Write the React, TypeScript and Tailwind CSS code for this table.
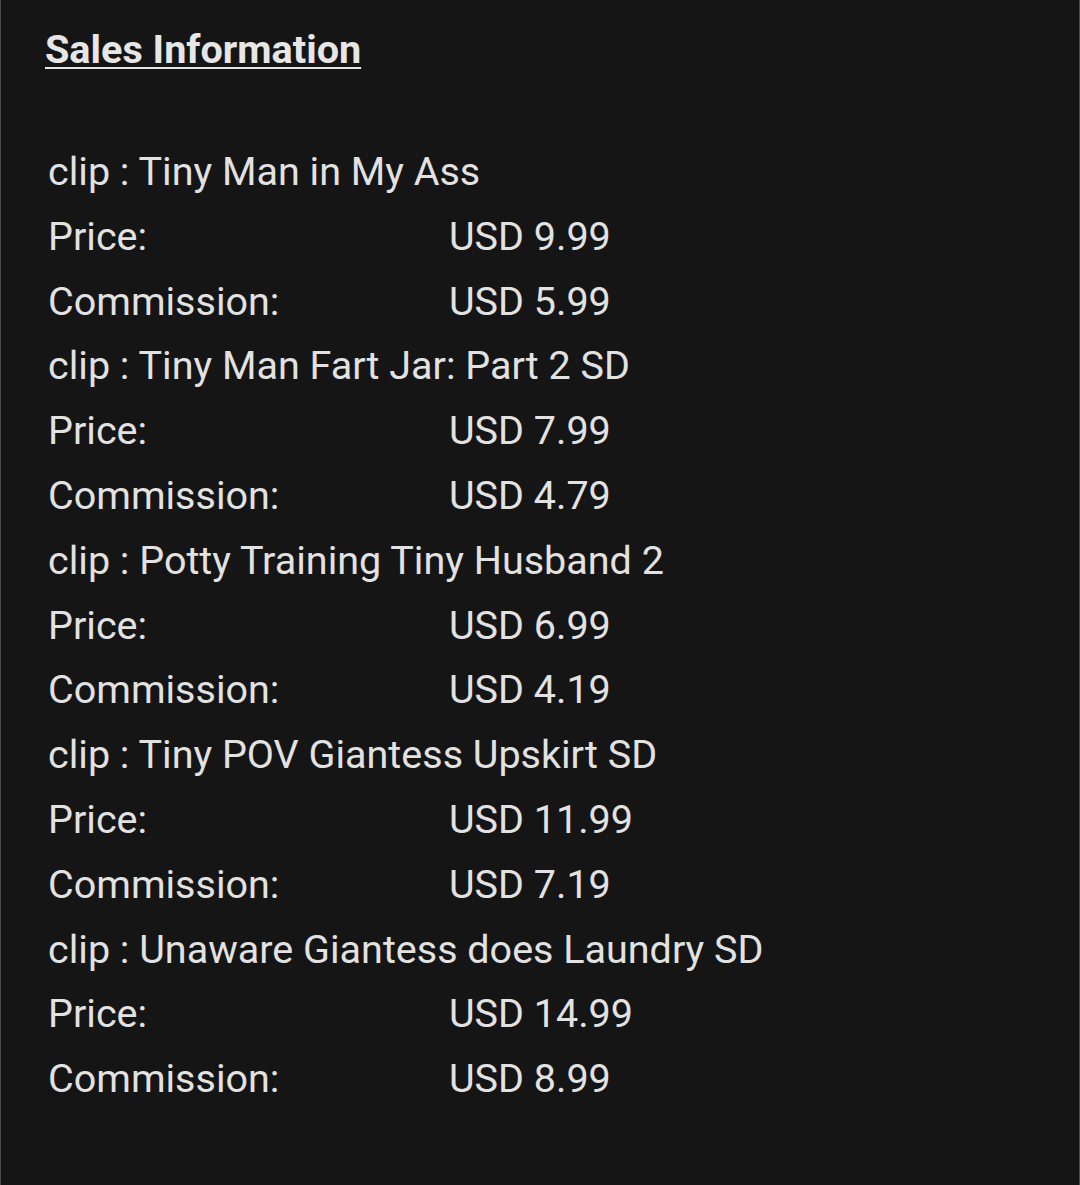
import React from "react";

interface SaleItem {
    clip: string;
    price: string;
    commission: string;
}

const sales: SaleItem[] = [
    { clip: "Tiny Man in My Ass", price: "USD 9.99", commission: "USD 5.99" },
    { clip: "Tiny Man Fart Jar: Part 2 SD", price: "USD 7.99", commission: "USD 4.79" },
    { clip: "Potty Training Tiny Husband 2", price: "USD 6.99", commission: "USD 4.19" },
    { clip: "Tiny POV Giantess Upskirt SD", price: "USD 11.99", commission: "USD 7.19" },
    { clip: "Unaware Giantess does Laundry SD", price: "USD 14.99", commission: "USD 8.99" },
];

export default function App() {
    return (
        <div className="w-[1080px] h-[1185px] bg-[#151515] border-x border-[#4a4a4a] text-[#e2e2e2] font-['Roboto',sans-serif] pl-[47px] pt-[26px] overflow-hidden">
            {/* Header */}
            <h2 className="-ml-[3px] text-[39.6px] leading-[48px] font-bold underline decoration-[2px] underline-offset-[4px] text-[#e6e6e6]">
                Sales Information
            </h2>

            {/* Sales rows */}
            <div className="mt-[66px] text-[39.5px] leading-[64.8px]">
                {sales.map((sale) => (
                    <div key={sale.clip}>
                        <div className="whitespace-nowrap">clip : {sale.clip}</div>
                        <div className="grid grid-cols-[401px_1fr]">
                            <span>Price:</span>
                            <span>{sale.price}</span>
                        </div>
                        <div className="grid grid-cols-[401px_1fr]">
                            <span>Commission:</span>
                            <span>{sale.commission}</span>
                        </div>
                    </div>
                ))}
            </div>
        </div>
    );
}
